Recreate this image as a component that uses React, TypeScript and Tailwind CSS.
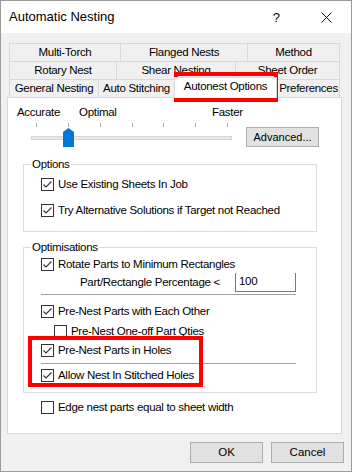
import React from "react";

function Check({ checked }: { checked: boolean }) {
  return (
    <svg width="13" height="13" viewBox="0 0 13 13" className="block shrink-0">
      <rect x="0.5" y="0.5" width="12" height="12" fill="#fff" stroke="#333333" />
      {checked && (
        <polyline points="2.5,6.5 5,9 10.5,3.5" fill="none" stroke="#333333" strokeWidth="1.1" />
      )}
    </svg>
  );
}

function CB({ label, checked = true, className = "" }: { label: string; checked?: boolean; className?: string }) {
  return (
    <div className={`flex h-[16px] items-center ${className}`}>
      <Check checked={checked} />
      <span className="ml-[4px] whitespace-nowrap leading-[14px]">{label}</span>
    </div>
  );
}

type Tab = { label: string; w: number; sel?: boolean };
const rows: Tab[][] = [
  [
    { label: "Multi-Torch", w: 111 },
    { label: "Flanged Nests", w: 127 },
    { label: "Method", w: 93 },
  ],
  [
    { label: "Rotary Nest", w: 107 },
    { label: "Shear Nesting", w: 119 },
    { label: "Sheet Order", w: 105 },
  ],
  [
    { label: "General Nesting", w: 89 },
    { label: "Auto Stitching", w: 76 },
    { label: "Autonest Options", w: 103, sel: true },
    { label: "Preferences", w: 63 },
  ],
];

export default function App() {
  return (
    <div className="relative flex h-[472px] w-[352px] flex-col border border-[#9a9a9a] bg-[#f0f0f0] font-['Liberation_Sans',Arial,sans-serif] text-[11.5px] tracking-[-0.3px] text-black">
      {/* Title bar */}
      <div className="flex h-[32px] shrink-0 items-center bg-white pl-[8px]">
        <span className="text-[13px] tracking-normal">Automatic Nesting</span>
        <span className="ml-auto text-[13px] leading-none tracking-normal">?</span>
        <svg width="11" height="11" viewBox="0 0 11 11" className="ml-[41px] mr-[19px]">
          <path d="M0.5 0.5 L10.5 10.5 M10.5 0.5 L0.5 10.5" stroke="#111" strokeWidth="1" />
        </svg>
      </div>

      {/* Body */}
      <div className="flex flex-col pl-[6px] pt-[10px]">
        {/* Tabs */}
        <div className="ml-[2px] flex w-[331px] flex-col">
          {rows.map((row, ri) => (
            <div key={ri} className="flex h-[18px] items-end">
              {row.map((t, ti) =>
                t.sel ? (
                  <div
                    key={ti}
                    style={{ width: t.w }}
                    className="relative z-10 -mb-[1px] flex h-[21px] items-center justify-center border-x border-t border-[#d9d9d9] bg-white pb-[3px]"
                  >
                    {t.label}
                  </div>
                ) : (
                  <div
                    key={ti}
                    style={{ width: t.w }}
                    className={`flex h-[18px] items-center justify-center whitespace-nowrap border-l border-t border-[#d9d9d9] bg-[#f0f0f0] ${
                      ti === row.length - 1 ? "border-r" : ""
                    }`}
                  >
                    {t.label}
                  </div>
                )
              )}
            </div>
          ))}
        </div>

        {/* Panel */}
        <div className="flex h-[337px] w-[335px] flex-col border border-[#d9d9d9] bg-white">
          {/* slider labels */}
          <div className="flex pl-[9px] pt-[7px] leading-[14px]">
            <span className="w-[62px]">Accurate</span>
            <span className="w-[133px]">Optimal</span>
            <span>Faster</span>
          </div>
          {/* slider + advanced */}
          <div className="mt-[1px] flex items-start">
            <svg width="238" height="28" viewBox="0 0 238 28" className="block shrink-0">
              {[28, 60, 92, 124, 155, 187, 219].map((x) => (
                <line key={x} x1={x + 0.5} y1="3" x2={x + 0.5} y2="7" stroke="#a8a8a8" strokeWidth="1" />
              ))}
              <rect x="23.5" y="16.5" width="200" height="3" fill="#e7eaea" stroke="#d6d6d6" />
              <polygon points="55,12 60.5,8 66,12 66,27 55,27" fill="#0078d7" />
            </svg>
            <button className="mt-[7px] flex h-[20px] w-[73px] items-center justify-center border border-[#adadad] bg-[#e1e1e1] text-[11px] tracking-normal">
              Advanced...
            </button>
          </div>

          {/* Options */}
          <fieldset className="ml-[15px] mt-[9px] h-[75px] w-[294px] border border-[#dcdcdc]">
            <legend className="ml-[7px] px-[1px] leading-[14px]">Options</legend>
            <div className="flex flex-col pl-[17px]">
              <CB className="mt-[5px]" label="Use Existing Sheets In Job" />
              <CB className="mt-[10px]" label="Try Alternative Solutions if Target not Reached" />
            </div>
          </fieldset>

          {/* Optimisations */}
          <fieldset className="ml-[15px] mt-[8px] h-[153px] w-[294px] border border-[#dcdcdc]">
            <legend className="ml-[7px] px-[1px] leading-[14px]">Optimisations</legend>
            <div className="flex flex-col pl-[17px]">
              <CB className="mt-[2px]" label="Rotate Parts to Minimum Rectangles" />
              <div className="mt-[1px] flex h-[19px] items-center">
                <span className="ml-[39px] w-[155px] whitespace-nowrap">Part/Rectangle Percentage &lt;</span>
                <div className="flex h-[19px] w-[61px] items-start border-x border-b border-[#7a7a7a] bg-white pl-[3px] pt-[1px] leading-[14px]">
                  100
                </div>
              </div>
              <div className="mt-[2px] h-px w-[255px] bg-[#a0a0a0]" />
              <CB className="mt-[8px]" label="Pre-Nest Parts with Each Other" />
              <CB className="ml-[13px] mt-[4px]" checked={false} label="Pre-Nest One-off Part Qties" />
              <CB className="mt-[3px]" label="Pre-Nest Parts in Holes" />
              <div className="mt-[5px] h-px w-[255px] bg-[#a0a0a0]" />
              <CB className="mt-[3px]" label="Allow Nest In Stitched Holes" />
            </div>
          </fieldset>

          <CB className="ml-[33px] mt-[6px]" checked={false} label="Edge nest parts equal to sheet width" />
        </div>

        {/* Buttons */}
        <div className="mt-[8px] flex justify-end gap-[8px] pr-[7px]">
          <button className="flex h-[21px] w-[73px] items-center justify-center border border-[#adadad] bg-[#e1e1e1] text-[11.5px] tracking-normal">
            OK
          </button>
          <button className="flex h-[21px] w-[73px] items-center justify-center border border-[#adadad] bg-[#e1e1e1] text-[11.5px] tracking-normal">
            Cancel
          </button>
        </div>
      </div>

      {/* Red annotation boxes */}
      <div className="pointer-events-none absolute left-[173px] top-[71px] h-[30px] w-[104px] border-[4px] border-[#ff0000]" />
      <div className="pointer-events-none absolute left-[27px] top-[335px] h-[51px] w-[175px] border-[4px] border-[#ff0000]" />
    </div>
  );
}
